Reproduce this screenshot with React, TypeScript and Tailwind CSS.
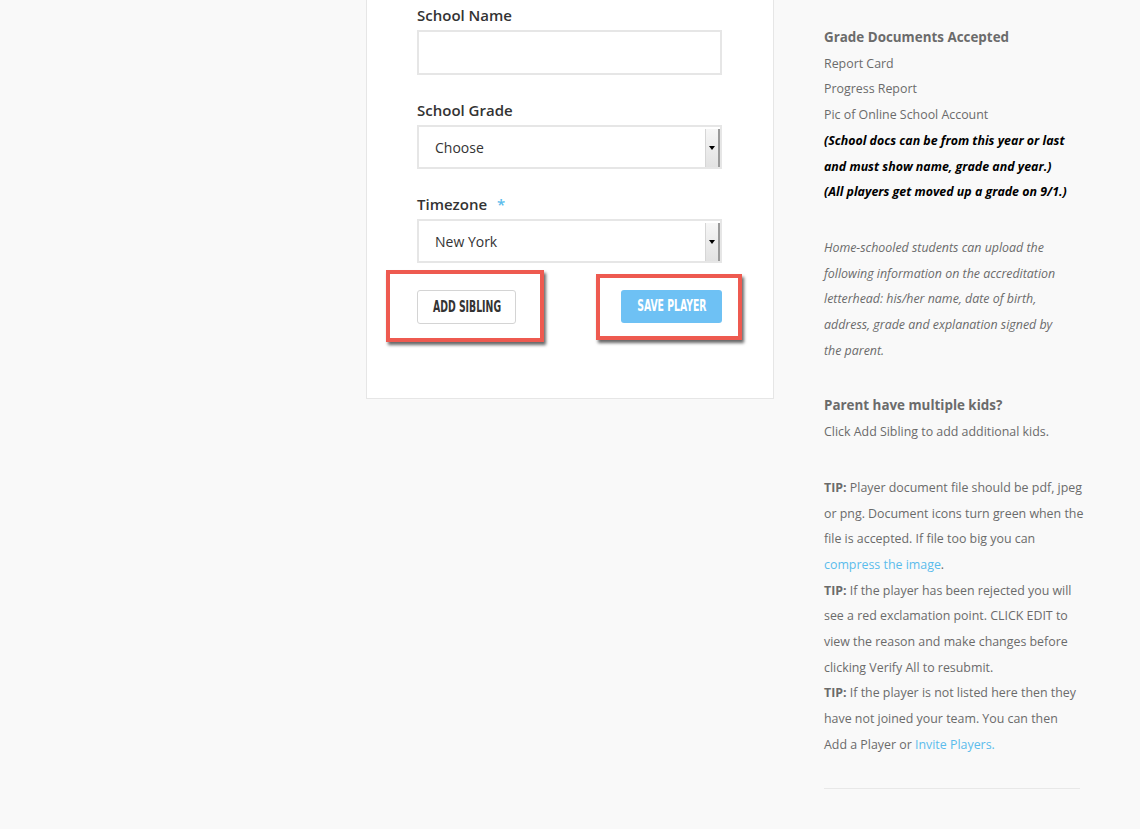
import React from 'react';

const SelectBox = ({ value }: { value: string }) => {
   return (
      <div className="relative h-[44px] w-[305px] border-2 border-[#e6e6e6] bg-white">
         <div className="flex h-full items-center pl-[16px] text-[14px] text-[#333]">
            {value}
         </div>
         <div className="absolute right-0 top-[2px] bottom-0 flex w-[15px] items-center justify-center border-l border-[#d6d6d6] border-r-2 border-r-[#9a9a9a] bg-gradient-to-b from-[#f6f6f6] to-[#e2e2e2]">
            <span className="block h-0 w-0 border-l-[3px] border-r-[3px] border-t-[4px] border-l-transparent border-r-transparent border-t-black" />
         </div>
      </div>
   );
};

const Annotated = ({
   children,
   box,
}: {
   children: React.ReactNode;
   box: string;
}) => {
   return (
      <div className="relative">
         {children}
         <span
            className={`pointer-events-none absolute border-4 border-[#ee5a50] shadow-[2px_3px_3px_rgba(0,0,0,0.6)] ${box}`}
         />
      </div>
   );
};

const App = () => {
   const label = "text-[15px] font-semibold text-[#333] leading-[20px]";
   const side = "text-[12.4px] leading-[25.7px] text-[#6b6b6b]";
   const head = "text-[13.4px] leading-[25.7px] font-bold text-[#6b6b6b]";
   return (
      <div
         className="flex min-h-screen bg-[#f9f9f9] pl-[366px]"
         style={{ fontFamily: '"Open Sans", "Noto Sans", sans-serif' }}
      >
         <div className="h-[399px] w-[408px] border-x border-b border-[#e6e6e6] bg-white px-[50px] pt-[5px]">
            <div className={label}>School Name</div>
            <div className="mt-[5px] h-[45px] w-[305px] border-2 border-[#e6e6e6] bg-white" />

            <div className={`${label} mt-[25px]`}>School Grade</div>
            <div className="mt-[5px]">
               <SelectBox value="Choose" />
            </div>

            <div className={`${label} mt-[25px]`}>
               Timezone <span className="ml-[6px] text-[#5bbcec]">*</span>
            </div>
            <div className="mt-[5px]">
               <SelectBox value="New York" />
            </div>

            <div
               className="mt-[27px] flex w-[305px] items-start justify-between"
               style={{ fontFamily: '"DejaVu Sans Condensed", "DejaVu Sans", sans-serif' }}
            >
               <Annotated box="-left-[31px] -right-[28px] -top-[20px] -bottom-[18px]">
                  <button className="flex h-[34px] w-[99px] items-center justify-center rounded-[3px] border border-[#d4d4d4] bg-white text-[#333]">
                     <span className="inline-block scale-x-[0.74] scale-y-[1.1] text-[14px] font-bold">
                        ADD SIBLING
                     </span>
                  </button>
               </Annotated>
               <Annotated box="-left-[25px] -right-[20px] -top-[16px] -bottom-[17px]">
                  <button className="flex h-[33px] w-[101px] items-center justify-center rounded-[3px] bg-[#6ec1f4] text-white">
                     <span className="inline-block scale-x-[0.74] scale-y-[1.1] text-[14px] font-bold">
                        SAVE PLAYER
                     </span>
                  </button>
               </Annotated>
            </div>
         </div>

         <div className="ml-[50px] w-[262px] pt-[25px]">
            <div className={head}>Grade Documents Accepted</div>
            <div className={side}>Report Card</div>
            <div className={side}>Progress Report</div>
            <div className={side}>Pic of Online School Account</div>
            <div className={`${side} w-[256px] font-bold italic text-black`}>
               (School docs can be from this year or last and must show name, grade and year.)
            </div>
            <div className={`${side} font-bold italic text-black`}>
               (All players get moved up a grade on 9/1.)
            </div>

            <p className={`${side} mt-[30px] w-[246px] italic`}>
               Home-schooled students can upload the following information on the accreditation
               letterhead: his/her name, date of birth, address, grade and explanation signed by
               the parent.
            </p>

            <div className={`${head} mt-[30px]`}>Parent have multiple kids?</div>
            <div className={side}>Click Add Sibling to add additional kids.</div>

            <p className={`${side} mt-[30px]`}>
               <b className="font-bold">TIP:</b> Player document file should be pdf, jpeg or
               png. Document icons turn green when the file is accepted. If file too big you can{' '}
               <a className="text-[#5bbcec]">compress the image</a>.
            </p>
            <p className={`${side} w-[256px]`}>
               <b className="font-bold">TIP:</b> If the player has been rejected you will see a
               red exclamation point. CLICK EDIT to view the reason and make changes before
               clicking Verify All to resubmit.
            </p>
            <p className={`${side} w-[256px]`}>
               <b className="font-bold">TIP:</b> If the player is not listed here then they have
               not joined your team. You can then Add a Player or{' '}
               <a className="text-[#5bbcec]">Invite Players.</a>
            </p>
            <div className="mt-[30px] w-[256px] border-t border-[#e8e8e8]" />
         </div>
      </div>
   );
};

export default App;
